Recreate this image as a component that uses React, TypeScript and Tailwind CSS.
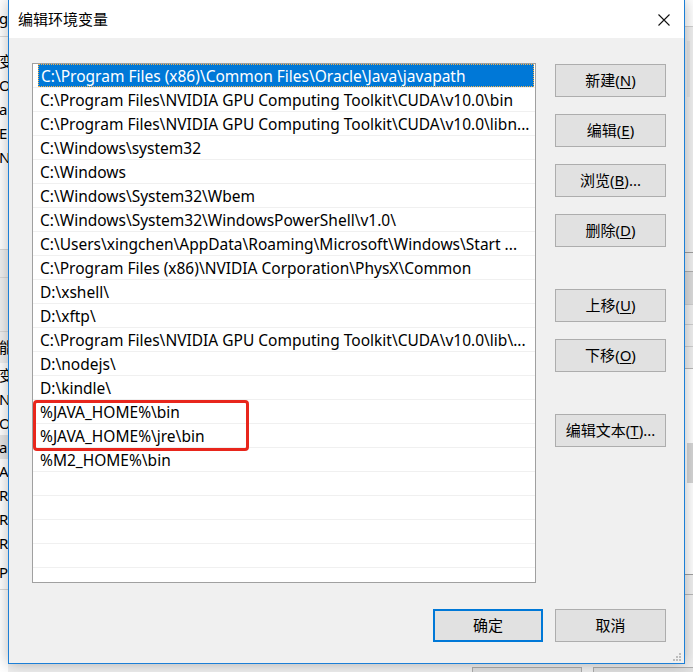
import React from "react";

const FONT = { fontFamily: '"Noto Sans", "Noto Sans CJK SC", sans-serif' };

const paths = [
  "C:\\Program Files (x86)\\Common Files\\Oracle\\Java\\javapath",
  "C:\\Program Files\\NVIDIA GPU Computing Toolkit\\CUDA\\v10.0\\bin",
  "C:\\Program Files\\NVIDIA GPU Computing Toolkit\\CUDA\\v10.0\\libn...",
  "C:\\Windows\\system32",
  "C:\\Windows",
  "C:\\Windows\\System32\\Wbem",
  "C:\\Windows\\System32\\WindowsPowerShell\\v1.0\\",
  "C:\\Users\\xingchen\\AppData\\Roaming\\Microsoft\\Windows\\Start ...",
  "C:\\Program Files (x86)\\NVIDIA Corporation\\PhysX\\Common",
  "D:\\xshell\\",
  "D:\\xftp\\",
  "C:\\Program Files\\NVIDIA GPU Computing Toolkit\\CUDA\\v10.0\\lib\\...",
  "D:\\nodejs\\",
  "D:\\kindle\\",
  "%JAVA_HOME%\\bin",
  "%JAVA_HOME%\\jre\\bin",
  "%M2_HOME%\\bin",
  "",
  "",
  "",
  "",
  "",
];

// bits of the window behind the dialog that peek out on the left
const leftBits: { h: number; t: string; bg?: string; line?: boolean }[] = [
  { h: 36, t: "g" },
  { h: 13, t: "", line: true },
  { h: 24, t: "变" },
  { h: 24, t: "Or" },
  { h: 24, t: "a" },
  { h: 24, t: "E" },
  { h: 24, t: "N" },
  { h: 80, t: "", bg: "bg-white" },
  { h: 28, t: "", bg: "bg-[#f0f0f0]", line: true },
  { h: 54, t: "", bg: "bg-[#f0f0f0]", line: true },
  { h: 32, t: "能", bg: "bg-[#f0f0f0]", line: true },
  { h: 24, t: "变" },
  { h: 24, t: "NV" },
  { h: 24, t: "OS" },
  { h: 24, t: "a", bg: "bg-[#e5e5e5]" },
  { h: 24, t: "A" },
  { h: 24, t: "R" },
  { h: 24, t: "R" },
  { h: 24, t: "R" },
  { h: 34, t: "P" },
  { h: 40, t: "", line: true },
];

function Btn({ label, k, tail, primary }: { label: string; k?: string; tail?: string; primary?: boolean }) {
  return (
    <div
      className={
        "flex h-[33px] items-center justify-center bg-[#e1e1e1] text-[15px] text-black " +
        (primary ? "w-[110px] border-2 border-[#0078d7]" : "w-[111px] border border-[#adadad]")
      }
    >
      <span>
        {label}
        {k ? (
          <>
            (<span className="underline underline-offset-2">{k}</span>)
          </>
        ) : null}
        {tail}
      </span>
    </div>
  );
}

export default function App() {
  return (
    <div className="relative h-[672px] w-[693px] overflow-hidden bg-[#f0f0f0]" style={FONT}>
      {/* background window */}
      <div className="absolute inset-0 flex justify-between">
        <div className="flex w-[8px] flex-col overflow-hidden bg-white">
          {leftBits.map((b, i) => (
            <div
              key={i}
              className={
                "flex items-center whitespace-nowrap text-[15px] text-black " +
                (b.bg ?? "bg-white") +
                (b.line ? " border-t border-[#d9d9d9]" : "")
              }
              style={{ height: b.h }}
            >
              <span className="-ml-[1px]">{b.t}</span>
            </div>
          ))}
        </div>
        <div className="flex w-[9px] flex-col bg-[#f0f0f0]">
          <div className="h-[26px] bg-white" />
          <div className="h-[226px] border-t border-[#d0d0d0] pl-[3px] pt-[14px]">
            <div className="h-[56px] w-[3px] bg-[#e6e6e6]" />
          </div>
          <div className="h-[19px] border-t border-[#a0a0a0] bg-[#f0f0f0]" />
          <div className="h-[33px] border-t border-[#b0b0b0] bg-[#dcdcdc]" />
          <div className="h-[20px] border-t border-[#cfcfcf]" />
          <div className="h-[22px] border-t border-[#cfcfcf]" />
          <div className="h-[22px] border-t border-[#cfcfcf]" />
          <div className="h-[206px] border-t border-[#b9b9b9] bg-white pl-[3px] pt-[74px]">
            <div className="h-[40px] w-[6px] bg-[#d6d6d6]" />
          </div>
          <div className="h-[20px] border-t border-[#a0a0a0]" />
          <div className="flex-1 border-t border-[#b9b9b9]" />
        </div>
      </div>
      <div className="absolute left-[472px] top-[667px] flex gap-[11px]">
        <div className="h-[30px] w-[110px] border border-[#adadad] bg-[#e1e1e1]" />
        <div className="h-[30px] w-[110px] border border-[#adadad] bg-[#e1e1e1]" />
      </div>

      {/* dialog */}
      <div className="absolute left-[8px] top-0 flex h-[664px] w-[677px] flex-col border-x border-b border-[#1c7fd6] bg-[#f0f0f0] shadow-[0_0_14px_rgba(0,0,0,0.28)]">
        <div className="flex h-[38px] items-center justify-between bg-white pl-[9px] pr-[14px]">
          <span className="text-[15px] text-black">编辑环境变量</span>
          <svg width="12" height="12" viewBox="0 0 12 12" className="mt-[1px]">
            <path d="M0.5 0.5 L11.5 11.5 M11.5 0.5 L0.5 11.5" stroke="#111" strokeWidth="1.1" fill="none" />
          </svg>
        </div>

        <div className="flex flex-1 flex-col">
          <div className="flex pl-[23px] pt-[25px]">
            <div className="relative h-[520px] w-[504px] overflow-hidden border border-[#a0a0a0] bg-white">
              {paths.map((p, i) => (
                <div key={i} className="flex h-[24px] border-b border-[#f0f0f0] pl-[5px] pr-[1px]">
                  <div
                    className={
                      "flex flex-1 items-center whitespace-nowrap pl-[2px] pt-[2px] text-[15.5px] leading-none " +
                      (i === 0 ? "border border-dotted border-[#f7b24a] bg-[#0078d7] text-white" : "text-black")
                    }
                  >
                    {p}
                  </div>
                </div>
              ))}
              <div className="absolute left-0 top-[336px] h-[51px] w-[216px] rounded-[4px] border-[3px] border-[#e8261c]" />
            </div>

            <div className="ml-[19px] flex flex-col pt-[1px]">
              <div className="flex flex-col gap-[17px]">
                <Btn label="新建" k="N" />
                <Btn label="编辑" k="E" />
                <Btn label="浏览" k="B" tail="..." />
                <Btn label="删除" k="D" />
              </div>
              <div className="mt-[42px] flex flex-col gap-[17px]">
                <Btn label="上移" k="U" />
                <Btn label="下移" k="O" />
              </div>
              <div className="mt-[42px]">
                <Btn label="编辑文本" k="T" tail="..." />
              </div>
            </div>
          </div>

          <div className="flex justify-end gap-[12px] pr-[18px] pt-[26px]">
            <Btn label="确定" primary />
            <Btn label="取消" />
          </div>

          <div className="mt-auto flex justify-end pb-[2px] pr-[3px]">
            <div className="grid grid-cols-3 gap-[1px]">
              <span />
              <span />
              <span className="h-[2px] w-[2px] bg-[#bcbcbc]" />
              <span />
              <span className="h-[2px] w-[2px] bg-[#bcbcbc]" />
              <span className="h-[2px] w-[2px] bg-[#bcbcbc]" />
              <span className="h-[2px] w-[2px] bg-[#bcbcbc]" />
              <span className="h-[2px] w-[2px] bg-[#bcbcbc]" />
              <span className="h-[2px] w-[2px] bg-[#bcbcbc]" />
            </div>
          </div>
        </div>
      </div>
    </div>
  );
}
